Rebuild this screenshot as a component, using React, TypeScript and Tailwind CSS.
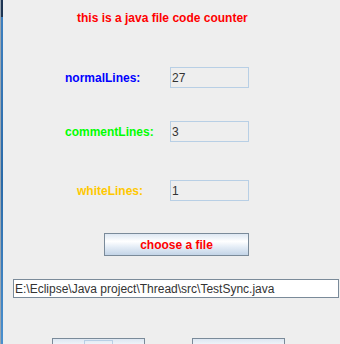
const fieldCls =
  'flex items-center h-[21px] w-[79px] border border-[#b8cfe5] bg-[#eeeeee] pl-[1px] text-[12px] text-[#333333]';
const labelCls = 'w-[167px] shrink-0 text-[12px] font-bold';
const btnBg = { background: 'linear-gradient(to bottom, #dde7f2, #ffffff)' };

export default function App() {
  return (
    <div
      className="w-[340px] h-[344px] overflow-hidden flex bg-[#eeeeee]"
      style={{ fontFamily: '"Liberation Sans", Arial, sans-serif' }}
    >
      {/* window edge on the left */}
      <div className="w-[3px] shrink-0 flex flex-col border-l border-[#9aa6b2]">
        <div className="h-[17px] bg-[#1d3553]" />
        <div className="flex-1 bg-gradient-to-b from-[#3d7fbf] via-[#2a6aa8] to-[#4a90cf]" />
      </div>

      <div className="flex-1 flex flex-col">
        <div className="pt-[11px] pl-[74px] h-[14px] leading-[14px] box-content text-[12px] font-bold text-[#ff0000]">
          this is a java file code counter
        </div>

        <div className="mt-[42px] flex items-center h-[21px]">
          <div className={`${labelCls} pl-[62px] text-[#0000ff]`}>normalLines:</div>
          <div className={fieldCls}>27</div>
        </div>
        <div className="mt-[33px] flex items-center h-[21px]">
          <div className={`${labelCls} pl-[62px] text-[#00ff00]`}>commentLines:</div>
          <div className={fieldCls}>3</div>
        </div>
        <div className="mt-[38px] flex items-center h-[21px]">
          <div className={`${labelCls} pl-[74px] text-[#ffc800]`}>whiteLines:</div>
          <div className={fieldCls}>1</div>
        </div>

        <div className="mt-[32px] pl-[101px] flex">
          <button
            type="button"
            className="w-[145px] h-[23px] border border-[#7a8a99] text-[12px] font-bold text-[#ff0000] flex items-center justify-center"
            style={{ background: 'linear-gradient(to bottom, #dde7f2 0%, #ffffff 35%, #e6eef7 60%, #c3d4e7 100%)' }}
          >
            choose a file
          </button>
        </div>

        <div className="mt-[23px] pl-[10px] flex">
          <div className="w-[326px] h-[19px] border border-[#7a8a99] bg-white flex items-center pl-[1px] text-[12px] text-[#333333] whitespace-nowrap">
            E:\Eclipse\Java project\Thread\src\TestSync.java
          </div>
        </div>

        {/* buttons cut off by the window's bottom edge */}
        <div className="mt-[40px] flex">
          <div className="ml-[49px] w-[93px] h-[12px] border border-[#7a8a99] flex" style={btnBg}>
            <div className="ml-[31px] mt-[1px] w-[29px] border border-[#b8cfe5]" />
          </div>
          <div className="ml-[47px] w-[93px] h-[12px] border border-[#7a8a99]" style={btnBg} />
        </div>
      </div>
    </div>
  );
}
